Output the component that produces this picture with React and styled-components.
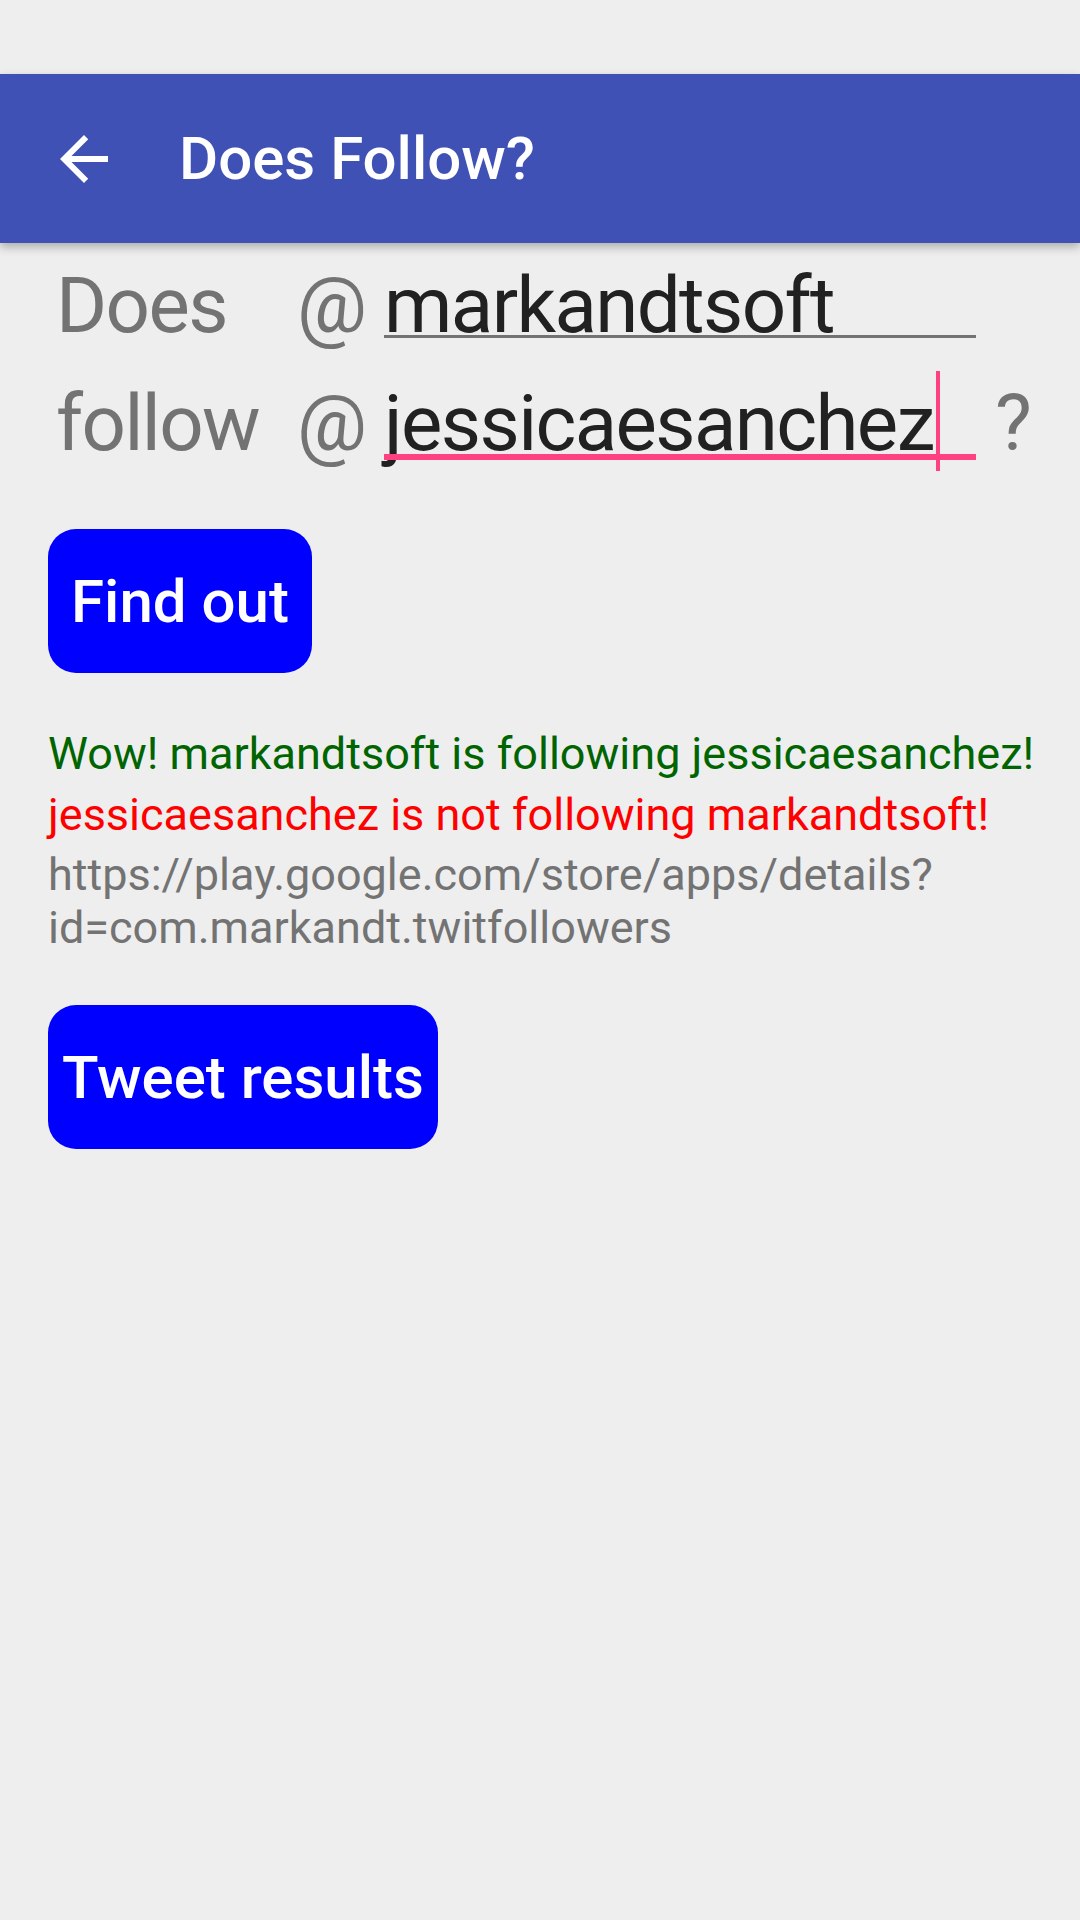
import styled, { createGlobalStyle } from "styled-components"

const GlobalStyle = createGlobalStyle`
    body {
        margin: 0;
        background: #eeeeee;
        font-family: Roboto, "Liberation Sans", sans-serif;
    }
`

const Screen = styled.div`
    min-height: 1920px;
    background: #eeeeee;
`

const StatusBar = styled.div`
    height: 74px;
`

const AppBar = styled.header`
    position: relative;
    z-index: 1;
    height: 169px;
    display: flex;
    align-items: center;
    background: #3f51b5;
    box-shadow: 0 4px 9px rgba(0, 0, 0, 0.28);
`

const BackButton = styled.button`
    width: 72px;
    height: 72px;
    margin-left: 48px;
    padding: 0;
    border: none;
    background: transparent;
    display: flex;
    align-items: center;
    justify-content: center;
`

const Title = styled.h1`
    margin: 0 0 0 59px;
    font-size: 60px;
    font-weight: 500;
    color: #ffffff;
`

const Content = styled.main`
    padding: 4px 24px 0 48px;
`

const Row = styled.div`
    display: flex;
    height: 118px;
    padding-left: 8px;
    font-size: 78px;
    line-height: 118px;
    letter-spacing: -1.6px;
    color: #737373;
`

const Label = styled.span`
    width: 241px;
`

const At = styled.span`
    width: 87px;
`

const Field = styled.div`
    position: relative;
    width: 592px;
    color: #212121;
    white-space: nowrap;

    &::after {
        content: "";
        position: absolute;
        left: 0;
        right: 0;
        top: ${p => p.$focused ? "89px" : "88px"};
        height: ${p => p.$focused ? "6px" : "3px"};
        background: ${p => p.$focused ? "#ff4081" : "#737373"};
    }
`

const Caret = styled.span`
    display: inline-block;
    width: 4px;
    height: 100px;
    margin: 6px 0 0 2px;
    vertical-align: top;
    background: #ff4081;
`

const Question = styled.span`
    margin-left: 19px;
`

const Button = styled.button`
    min-width: 264px;
    height: 144px;
    padding: 0 14px;
    margin-top: ${p => p.$top}px;
    border: none;
    border-radius: 28px;
    background: #0000ff;
    color: #ffffff;
    font-family: Roboto, "Liberation Sans", sans-serif;
    font-size: 60px;
    font-weight: 500;
    display: block;
`

const Messages = styled.div`
    margin-top: 54px;
    font-size: 45px;
    line-height: 53px;
    white-space: nowrap;
`

const Message = styled.p`
    margin: 0 0 ${p => p.$gap || 0}px 0;
    color: ${p => p.$color};
`

function BackArrow() {
    return (
        <svg width="72" height="72" viewBox="0 0 24 24">
            <path fill="#ffffff" d="M20 11H7.83l5.59-5.59L12 4l-8 8 8 8 1.41-1.41L7.83 13H20v-2z" />
        </svg>
    )
}

export default function App() {
    return (
        <>
            <GlobalStyle />
            <Screen>
                <StatusBar />
                <AppBar>
                    <BackButton><BackArrow /></BackButton>
                    <Title>Does Follow?</Title>
                </AppBar>
                <Content>
                    <Row>
                        <Label>Does</Label>
                        <At>@</At>
                        <Field>markandtsoft</Field>
                    </Row>
                    <Row>
                        <Label>follow</Label>
                        <At>@</At>
                        <Field $focused>jessicaesanchez<Caret /></Field>
                        <Question>?</Question>
                    </Row>

                    <Button $top={46}>Find out</Button>

                    <Messages>
                        <Message $color="#006400" $gap={8}>Wow! markandtsoft is following jessicaesanchez!</Message>
                        <Message $color="#ff0000" $gap={7}>jessicaesanchez is not following markandtsoft!</Message>
                        <Message $color="#737373">
                            https://play.google.com/store/apps/details?<br />id=com.markandt.twitfollowers
                        </Message>
                    </Messages>

                    <Button $top={51}>Tweet results</Button>
                </Content>
            </Screen>
        </>
    )
}
